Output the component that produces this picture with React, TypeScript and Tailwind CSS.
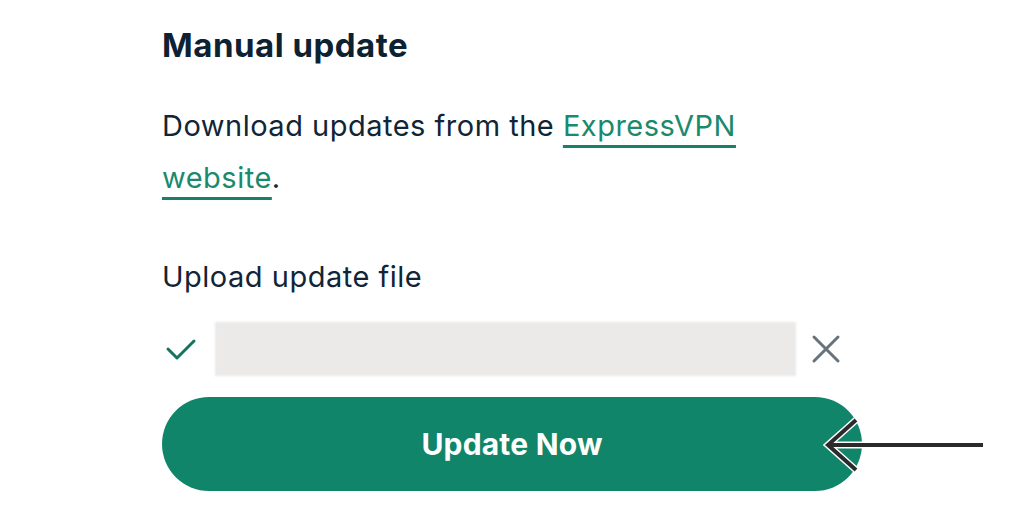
import React from "react";

export default function App() {
  return (
    <div className="w-[1024px] h-[521px] bg-white overflow-hidden relative" style={{ fontFamily: "Inter, 'Noto Sans', sans-serif" }}>
      <div className="pl-[162px] pt-[25px] w-[862px]">
        <h2 className="text-[33px] leading-[40px] font-bold tracking-[0.5px] text-[#0c2233]">Manual update</h2>
        <p className="mt-[35px] text-[29px] leading-[52px] tracking-[0.5px] text-[#112536] w-[600px]">
          Download updates from the{" "}
          <a className="text-[#1a8a6e] underline decoration-[3px] underline-offset-[9px] decoration-[#168166]">ExpressVPN website</a>.
        </p>
        <div className="mt-[53px] text-[29px] leading-[40px] tracking-[0.5px] text-[#112536]">Upload update file</div>
        <div className="mt-[25px] flex items-center h-[54px]">
          <svg width="32" height="32" viewBox="0 0 32 32" fill="none" stroke="#15735e" strokeWidth="3" strokeLinecap="round" strokeLinejoin="round" className="ml-[3px]">
            <path d="M3 12L12 21L29 4" transform="translate(0,4)" />
          </svg>
          <div className="ml-[18px] w-[581px] h-[54px] bg-[#ebeae9] blur-[1px]" />
          <svg width="30" height="30" viewBox="0 0 30 30" fill="none" stroke="#66737c" strokeWidth="3" strokeLinecap="round" className="ml-[15px]">
            <path d="M3 3L27 27M27 3L3 27" />
          </svg>
        </div>
        <button className="mt-[21px] w-[700px] h-[94px] rounded-full bg-[#10856a] text-white text-[30px] font-bold tracking-[0.2px] flex items-center justify-center">
          Update Now
        </button>
      </div>
      <svg className="absolute left-[820px] top-[414px]" width="170" height="62" viewBox="0 0 170 62" fill="none">
        <g stroke="#ffffff" strokeWidth="7" strokeLinecap="butt">
          <path d="M9 31H163" />
          <path d="M36 6L8 31L36 56" />
        </g>
        <g stroke="#2b2b2b" strokeWidth="4" strokeLinecap="butt">
          <path d="M9 31H163" />
          <path d="M36 6L8 31L36 56" />
        </g>
      </svg>
    </div>
  );
}
